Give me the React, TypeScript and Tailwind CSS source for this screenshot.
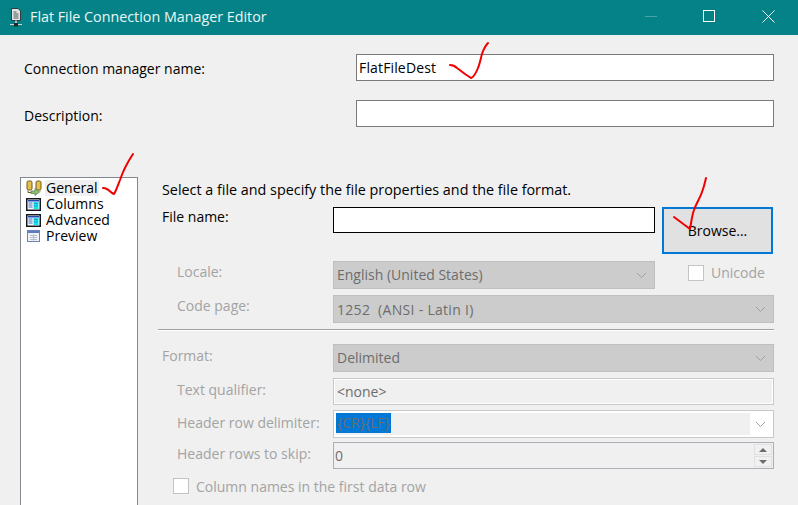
const font = { fontFamily: '"Open Sans", "Noto Sans", sans-serif' };

function Chevron({ color = '#a0a0a0' }: { color?: string }) {
  return (
    <svg width="11" height="7" viewBox="0 0 11 7" fill="none">
      <path d="M1 1l4.5 4.5L10 1" stroke={color} strokeWidth="1" />
    </svg>
  );
}

function FormLabel({ children, muted, indent, className = '' }: { children: React.ReactNode; muted?: boolean; indent?: boolean; className?: string }) {
  return (
    <div className={`w-[171px] ${indent ? 'pl-[15px]' : ''} ${muted ? 'text-[#a3a3a3]' : 'text-black'} ${className}`}>
      {children}
    </div>
  );
}

function DisabledSelect({ value, className }: { value: string; className: string }) {
  return (
    <div className={`h-[28px] flex items-center justify-between pl-[3px] pr-[7px] bg-[#cccccc] border border-[#bfbfbf] text-[#6d6d6d] ${className}`}>
      <span className="whitespace-pre">{value}</span>
      <Chevron />
    </div>
  );
}

function GeneralIcon() {
  return (
    <svg width="16" height="16" viewBox="0 0 16 16">
      <rect x="1" y="1" width="5" height="9" rx="1.500" fill="#e6c04e" stroke="#6b5a1a" />
      <rect x="10" y="1" width="5" height="9" rx="1.500" fill="#e6c04e" stroke="#6b5a1a" />
      <path d="M2 10.500v2h3M14 10.500v1" stroke="#6b5a1a" strokeWidth="1" fill="none" />
      <path d="M5 11h4V8.500l4.500 3.500L9 15.500V13.500H5z" fill="#8cc46a" stroke="#4f7a52" strokeWidth="0.700" />
    </svg>
  );
}

function ColumnsIcon() {
  return (
    <svg width="15" height="13" viewBox="0 0 15 13">
      <rect x="0.750" y="0.750" width="13.500" height="11.500" fill="#fff" stroke="#16181f" strokeWidth="1.500" />
      <rect x="2" y="2" width="11" height="1.500" fill="#1f49b0" />
      <rect x="2.500" y="4" width="4" height="7" fill="#f4f6fb" />
      <path d="M2.500 5h4M2.500 7h4M2.500 9h4" stroke="#1f49b0" strokeWidth="0.800" />
      <rect x="7.500" y="4" width="5" height="7" fill="#14e4f2" />
      <path d="M8 5.500h4M8 8h4" stroke="#0d7f9c" strokeWidth="0.600" />
    </svg>
  );
}

function PreviewIcon() {
  return (
    <svg width="13" height="12" viewBox="0 0 13 12">
      <rect x="0.500" y="0.500" width="12" height="11" fill="#eef1f6" stroke="#6d83b8" />
      <rect x="1" y="1" width="11" height="2" fill="#5b7cc4" />
      <path d="M3 5.500h7M3 7.500h7M3 9.500h7M6.500 4.500v6" stroke="#aab4c8" strokeWidth="0.800" />
    </svg>
  );
}

function TitleIcon() {
  return (
    <svg width="14" height="19" viewBox="0 0 14 19">
      <path d="M2.500 0.500h6.500l2.500 2.500v9.500h-9z" fill="#dfe3e3" stroke="#30393b" />
      <path d="M4.500 4h3M4.500 6h5M4.500 8h5M4.500 10h5" stroke="#4d5759" />
      <path d="M7 12.500v3" stroke="#cfd8d8" strokeWidth="1.500" />
      <path d="M1 16.500h12" stroke="#cfd8d8" />
      <rect x="5" y="15" width="4" height="3.500" fill="#20292b" />
    </svg>
  );
}

const items = [
  { name: 'General', icon: <GeneralIcon /> },
  { name: 'Columns', icon: <ColumnsIcon /> },
  { name: 'Advanced', icon: <ColumnsIcon /> },
  { name: 'Preview', icon: <PreviewIcon /> },
];

export default function App() {
  return (
    <div className="relative w-[798px] h-[505px] overflow-hidden flex flex-col bg-[#f0f0f0] text-[14px] leading-[18px] text-black" style={font}>
      <div className="h-[35px] shrink-0 flex items-center bg-[#058287] text-[#eaf6f6] pl-[9px]">
        <TitleIcon />
        <span className="ml-[7px] text-[14.3px] mb-[1px]">Flat File Connection Manager Editor</span>
        <div className="ml-auto flex items-center mb-[3px]">
          <div className="w-[46px] flex justify-center"><div className="w-[12px] h-px bg-[#4aa3a7]" /></div>
          <div className="w-[46px] ml-[12px] flex justify-center"><div className="w-[12px] h-[12px] border border-white" /></div>
          <div className="w-[46px] ml-[13px] mr-[7px] flex justify-center">
            <svg width="13" height="13" viewBox="0 0 13 13"><path d="M0.500 0.500l12 12M12.500 0.500l-12 12" stroke="#fff" /></svg>
          </div>
        </div>
      </div>

      <div className="flex items-center h-[27px] mt-[19px] pl-[24px] pr-[24px]">
        <div className="w-[332px] pt-[2px]">Connection manager name:</div>
        <div className="flex-1 h-full flex items-center bg-white border border-[#7a7a7a] pl-[2px] pt-[1px] tracking-[0.15px]">FlatFileDest</div>
      </div>
      <div className="flex items-center h-[27px] mt-[19px] pl-[24px] pr-[24px]">
        <div className="w-[332px] pt-[4px]">Description:</div>
        <div className="flex-1 h-full bg-white border border-[#7a7a7a]" />
      </div>

      <div className="flex flex-1 mt-[50px] pl-[20px] pr-[24px] min-h-0">
        <div className="w-[118px] shrink-0 bg-white border border-[#828790] pt-[2px] pl-[4px] h-[340px]">
          {items.map((it) => (
            <div key={it.name} className="flex items-center h-[16px]">
              <span className="w-[17px] flex justify-center">{it.icon}</span>
              <div className={`ml-[3px] px-px h-[16px] leading-[16px] ${it.name === 'General' ? 'bg-[#f0f0f0]' : ''}`}>{it.name}</div>
            </div>
          ))}
        </div>

        <div className="flex-1 min-w-0 pl-[20px] flex flex-col">
          <div className="pl-[4px] mt-[4px] h-[18px] text-[14.35px]">Select a file and specify the file properties and the file format.</div>
          <div className="flex pl-[4px] mt-[8px] h-[47px]">
            <FormLabel className="pt-[1px]">File name:</FormLabel>
            <div className="w-[322px] h-[26px] bg-white border border-black" />
            <div className="ml-[7px] w-[111px] h-[47px] flex items-center justify-center bg-[#e1e1e1] border-2 border-[#0078d7]">Browse...</div>
          </div>

          <div className="flex items-center pl-[4px] mt-[7px] h-[28px]">
            <FormLabel muted indent className="pb-[6px]">Locale:</FormLabel>
            <DisabledSelect value="English (United States)" className="w-[322px]" />
            <div className="ml-[33px] w-[16px] h-[16px] bg-white border border-[#c4c4c4] mb-[5px]" />
            <span className="ml-[7px] text-[#a3a3a3] mb-[5px]">Unicode</span>
          </div>
          <div className="flex items-center pl-[4px] mt-[6px] h-[28px]">
            <FormLabel muted indent className="pb-[6px]">Code page:</FormLabel>
            <DisabledSelect value="1252  (ANSI - Latin I)" className="flex-1 tracking-[0.3px] pt-[1px]" />
          </div>

          <div className="mt-[6px] h-[2px] border-t border-[#a0a0a0] bg-white" />

          <div className="flex items-center pl-[4px] mt-[13px] h-[28px]">
            <FormLabel muted className="pb-[5px]">Format:</FormLabel>
            <DisabledSelect value="Delimited" className="flex-1" />
          </div>
          <div className="flex items-center pl-[4px] mt-[6px] h-[27px]">
            <FormLabel muted indent className="pb-[3px]">Text qualifier:</FormLabel>
            <div className="flex-1 h-full flex items-center pl-[3px] bg-[#f0f0f0] border border-[#c8c8c8] shadow-[inset_0_0_0_1px_#fff] text-[#6d6d6d]">&lt;none&gt;</div>
          </div>
          <div className="flex items-center pl-[4px] mt-[5px] h-[28px]">
            <FormLabel muted indent className="pb-[3px]">Header row delimiter:</FormLabel>
            <div className="flex-1 h-full flex items-center bg-white border border-[#c8c8c8] pr-[7px]">
              <div className="flex-1 h-[22px] flex items-center bg-[#f0f0f0] mr-[5px] ml-[2px]">
                <span className="bg-[#0078d7] text-[#6d6d6d] h-[20px] leading-[20px] mb-[2px] px-px">{'{CR}{LF}'}</span>
              </div>
              <Chevron />
            </div>
          </div>
          <div className="flex items-center pl-[4px] mt-[4px] h-[27px]">
            <FormLabel muted indent className="pb-[3px]">Header rows to skip:</FormLabel>
            <div className="flex-1 h-full flex items-center justify-between pl-[1px] pr-[1px] bg-[#f0f0f0] border border-[#adadb5] text-[#6d6d6d]">
              <span>0</span>
              <div className="flex flex-col gap-px">
                <div className="w-[18px] h-[11px] flex items-center justify-center border border-[#e0e0e0]">
                  <div className="w-0 h-0 border-x-[4px] border-x-transparent border-b-[4px] border-b-[#6d6d6d]" />
                </div>
                <div className="w-[18px] h-[11px] flex items-center justify-center border border-[#e0e0e0]">
                  <div className="w-0 h-0 border-x-[4px] border-x-transparent border-t-[4px] border-t-[#6d6d6d]" />
                </div>
              </div>
            </div>
          </div>
          <div className="flex items-center pl-[15px] mt-[9px] h-[16px]">
            <div className="w-[16px] h-[16px] bg-white border border-[#c4c4c4]" />
            <span className="ml-[7px] pt-[1px] text-[#a3a3a3]">Column names in the first data row</span>
          </div>
        </div>
      </div>

      <svg className="absolute inset-0 pointer-events-none" width="798" height="505" fill="none" stroke="#f00000" strokeWidth="2" strokeLinecap="round" strokeLinejoin="round">
        <path d="M450 65c3 0 5 1 7 3l8 6 6 4c3-1 5-5 7-10 3-7 3-14 6-19 1-2 2-4 4-6" />
        <path d="M103 188c3 0 6 2 9 5l2 1c2-3 4-9 6-14 3-9 7-17 13-26" />
        <path d="M674 217l8 6 8 6M690 229c1-5 2-14 4-19 2-6 6-12 8-18 2-5 3-10 4-14" />
      </svg>
    </div>
  );
}
